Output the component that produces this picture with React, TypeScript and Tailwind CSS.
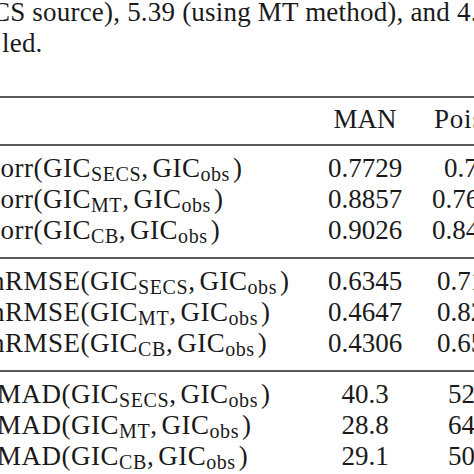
import React from "react";

function Sub({ children }: { children: React.ReactNode }) {
  return (
    <span className="text-[20px] leading-none align-[-4px] tracking-[0.6px]">
      {children}
    </span>
  );
}

function Label({
  prefix,
  sub,
  offset,
}: {
  prefix: string;
  sub: string;
  offset: string;
}) {
  return (
    <div className={"whitespace-nowrap tracking-[0.5px] " + offset}>
      {prefix}(GIC<Sub>{sub}</Sub>,<span className="inline-block w-[4px]" />
      GIC<Sub>obs</Sub>
      <span className="ml-[3px]">)</span>
    </div>
  );
}

type Row = { prefix: string; sub: string; man: string; next: string; pad: string };

function Section({ rows, offset }: { rows: Row[]; offset: string }) {
  return (
    <div className="flex flex-col pt-[7px] pb-[11px]">
      {rows.map((r) => (
        <div key={r.sub} className="grid grid-cols-[325px_80px_1fr] leading-[31px]">
          <Label prefix={r.prefix} sub={r.sub} offset={offset} />
          <div className="text-center whitespace-nowrap">{r.man}</div>
          <div className={"whitespace-nowrap " + r.pad}>{r.next}</div>
        </div>
      ))}
    </div>
  );
}

function Rule() {
  return <div className="h-[2px] w-full bg-[#5a5a5a]" />;
}

export default function App() {
  const corr: Row[] = [
    { prefix: "corr", sub: "SECS", man: "0.7729", next: "0.771", pad: "pl-[39px]" },
    { prefix: "corr", sub: "MT", man: "0.8857", next: "0.7613", pad: "pl-[27px]" },
    { prefix: "corr", sub: "CB", man: "0.9026", next: "0.8412", pad: "pl-[27px]" },
  ];
  const rmse: Row[] = [
    { prefix: "nRMSE", sub: "SECS", man: "0.6345", next: "0.7102", pad: "pl-[32px]" },
    { prefix: "nRMSE", sub: "MT", man: "0.4647", next: "0.8231", pad: "pl-[32px]" },
    { prefix: "nRMSE", sub: "CB", man: "0.4306", next: "0.6518", pad: "pl-[32px]" },
  ];
  const mad: Row[] = [
    { prefix: "MAD", sub: "SECS", man: "40.3", next: "52.6", pad: "pl-[43px]" },
    { prefix: "MAD", sub: "MT", man: "28.8", next: "64.1", pad: "pl-[43px]" },
    { prefix: "MAD", sub: "CB", man: "29.1", next: "50.7", pad: "pl-[43px]" },
  ];

  return (
    <div className="w-[474px] h-[474px] overflow-hidden bg-white text-[#1a1a1a] text-[27px] font-['Liberation_Serif',serif]">
      <div className="mt-[-3px] leading-[31px] tracking-[0.2px]">
        <div className="whitespace-nowrap ml-[-8px]">
          CS source), 5.39 (using MT method), and 4.92 (using CB method)
        </div>
        <div className="whitespace-nowrap pl-[2px]">led.</div>
      </div>

      <div className="mt-[37px]">
        <Rule />
        <div className="grid grid-cols-[325px_80px_1fr] leading-[31px] pt-[6px] pb-[9px]">
          <div />
          <div className="text-center">MAN</div>
          <div className="pl-[29px] whitespace-nowrap tracking-[0.8px]">Poisson</div>
        </div>
        <Rule />
        <Section rows={corr} offset="ml-[-12px]" />
        <Rule />
        <Section rows={rmse} offset="ml-[-9px]" />
        <Rule />
        <Section rows={mad} offset="ml-[-3px]" />
      </div>
    </div>
  );
}
